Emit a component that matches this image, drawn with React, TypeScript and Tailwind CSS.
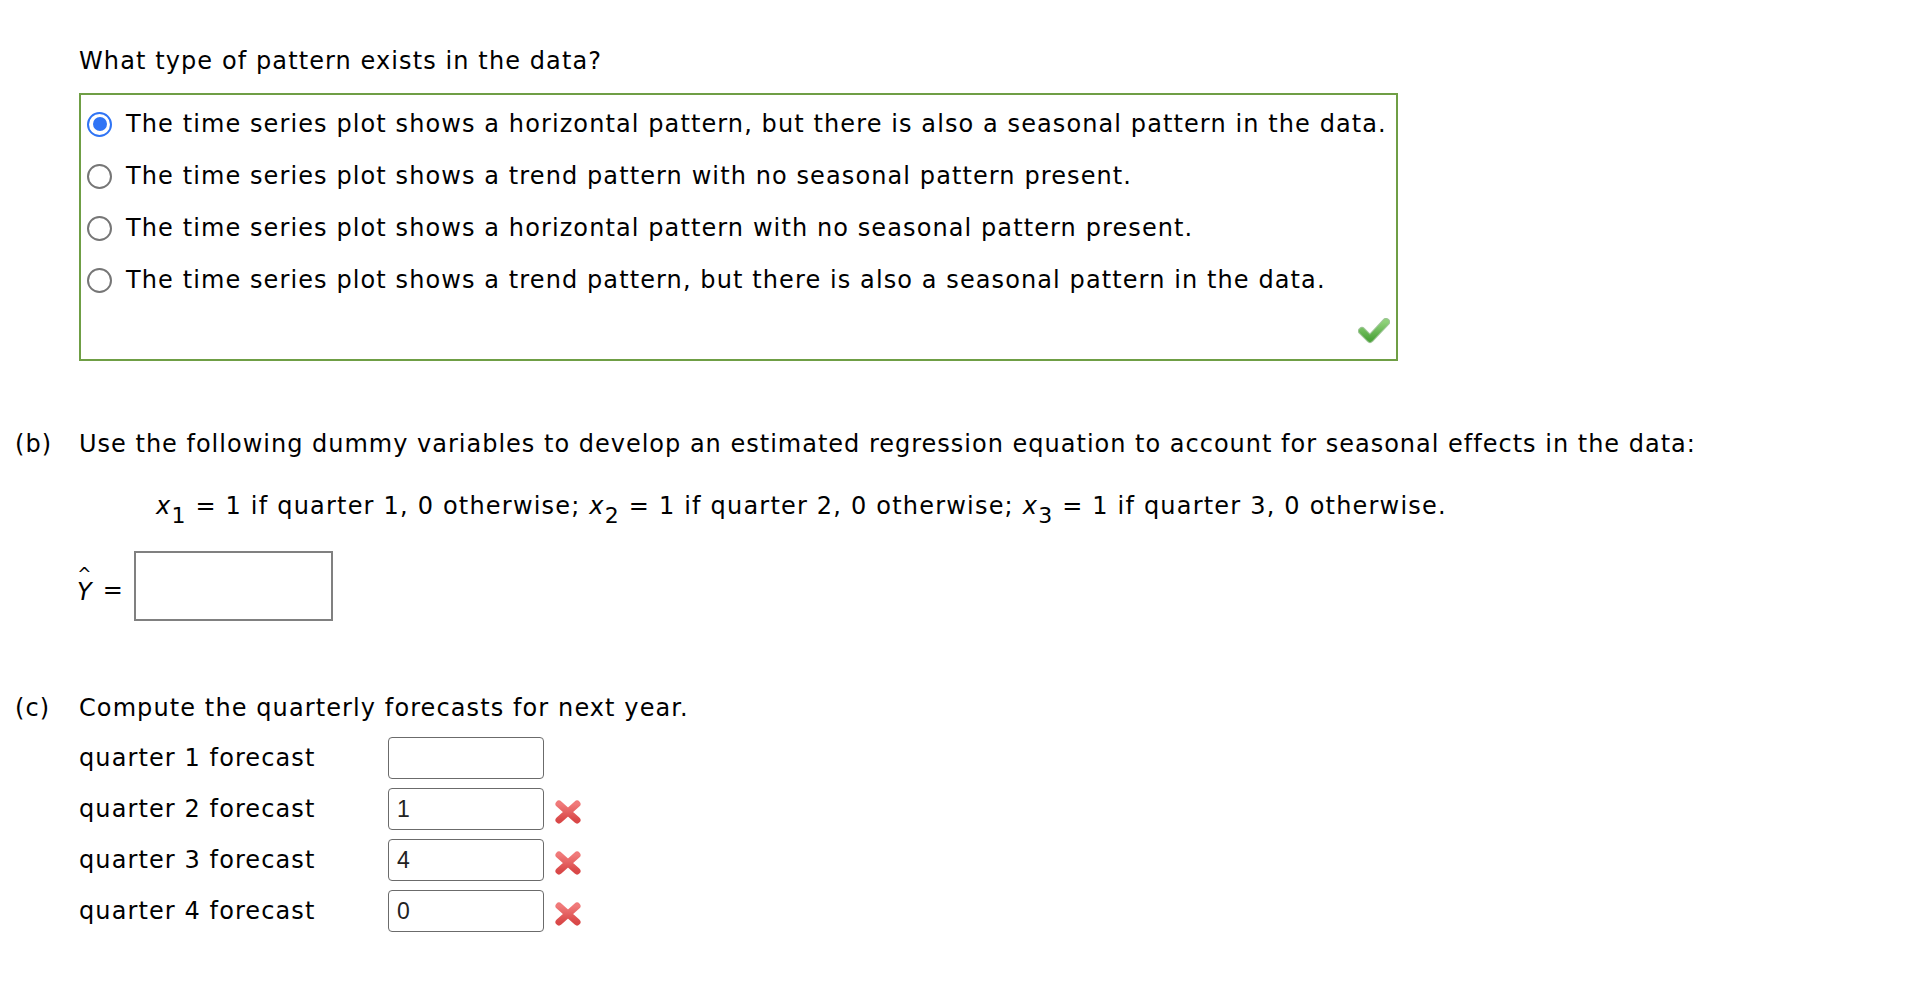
import React from 'react'

const options = [
  'The time series plot shows a horizontal pattern, but there is also a seasonal pattern in the data.',
  'The time series plot shows a trend pattern with no seasonal pattern present.',
  'The time series plot shows a horizontal pattern with no seasonal pattern present.',
  'The time series plot shows a trend pattern, but there is also a seasonal pattern in the data.',
]

const forecasts = [
  { label: 'quarter 1 forecast', value: '', wrong: false },
  { label: 'quarter 2 forecast', value: '1', wrong: true },
  { label: 'quarter 3 forecast', value: '4', wrong: true },
  { label: 'quarter 4 forecast', value: '0', wrong: true },
]

function Radio({ checked }: { checked: boolean }) {
  if (checked) {
    return (
      <span className="flex h-[25px] w-[25px] shrink-0 items-center justify-center rounded-full border-[2.5px] border-[#2f74f5] bg-white">
        <span className="h-[14px] w-[14px] rounded-full bg-[#2f74f5]" />
      </span>
    )
  }
  return <span className="h-[25px] w-[25px] shrink-0 rounded-full border-[2px] border-[#767676] bg-white" />
}

function CheckMark() {
  return (
    <svg width="32" height="26" viewBox="0 0 32 26">
      <defs>
        <linearGradient id="chk" x1="0" y1="0" x2="0" y2="1">
          <stop offset="0" stopColor="#8fd17a" />
          <stop offset="1" stopColor="#4ea53c" />
        </linearGradient>
      </defs>
      <path d="M4 13 L12 21 L28 4" fill="none" stroke="#3f8a32" strokeWidth="8" strokeLinecap="round" strokeLinejoin="round" opacity="0.5" />
      <path d="M4 13 L12 21 L28 4" fill="none" stroke="url(#chk)" strokeWidth="6" strokeLinecap="round" strokeLinejoin="round" />
    </svg>
  )
}

function Cross() {
  return (
    <svg width="28" height="26" viewBox="0 0 28 26">
      <defs>
        <linearGradient id="crs" x1="0" y1="0" x2="0" y2="1">
          <stop offset="0" stopColor="#f07a7a" />
          <stop offset="1" stopColor="#d94848" />
        </linearGradient>
      </defs>
      <path d="M5 5 L23 21 M23 5 L5 21" fill="none" stroke="url(#crs)" strokeWidth="7" strokeLinecap="round" />
    </svg>
  )
}

function Sub({ v, n }: { v: string; n: string }) {
  return (
    <span>
      <i>{v}</i>
      <span className="relative top-[9px] text-[22px]">{n}</span>
    </span>
  )
}

export default function App() {
  return (
    <div
      className="min-h-screen bg-white pt-[46px] text-[24px] leading-[30px] tracking-[1.1px] text-black"
      style={{ fontFamily: '"DejaVu Sans", Verdana, sans-serif' }}
    >
      <div className="pl-[79px]">
        <div>What type of pattern exists in the data?</div>

        <div className="mt-[17px] w-[1319px] border-2 border-[#6f9e45] pt-[3px] pb-[15px]">
          {options.map((o, i) => (
            <div key={i} className="flex h-[52px] items-center pl-[6px]">
              <Radio checked={i === 0} />
              <span className="ml-[14px]">{o}</span>
            </div>
          ))}
          <div className="mt-[12px] flex justify-end pr-[6px]">
            <CheckMark />
          </div>
        </div>
      </div>

      <div className="mt-[68px] flex">
        <span className="w-[79px] shrink-0 pl-[15px]">(b)</span>
        <span className="tracking-[1px]">Use the following dummy variables to develop an estimated regression equation to account for seasonal effects in the data:</span>
      </div>

      <div className="mt-[32px] pl-[156px] tracking-[1.2px]">
        <Sub v="x" n="1" /> = 1 if quarter 1, 0 otherwise; <Sub v="x" n="2" /> = 1 if quarter 2, 0 otherwise; <Sub v="x" n="3" /> = 1 if quarter 3, 0 otherwise.
      </div>

      <div className="mt-[29px] flex items-center pl-[77px]">
        <span className="flex flex-col items-center pt-[2px]">
          <span className="h-[10px] text-[17px] leading-[10px]">^</span>
          <span className="italic leading-[26px]">Y</span>
        </span>
        <span className="ml-[10px] pt-[8px]">=</span>
        <div className="ml-[10px] h-[70px] w-[199px] border-2 border-[#808080] bg-white" />
      </div>

      <div className="mt-[72px] flex">
        <span className="w-[79px] shrink-0 pl-[15px]">(c)</span>
        <span>Compute the quarterly forecasts for next year.</span>
      </div>

      <div className="mt-[14px] flex flex-col gap-[9px] pl-[79px]">
        {forecasts.map((f) => (
          <div key={f.label} className="flex h-[42px] items-center">
            <span className="w-[309px]">{f.label}</span>
            <div
              className="flex h-[42px] w-[156px] items-center rounded-[4px] border-[1.5px] border-[#6b6b6b] px-[8px] text-[23px] tracking-normal text-[#222]"
              style={{ fontFamily: '"Liberation Sans", Arial, sans-serif' }}
            >
              {f.value}
            </div>
            {f.wrong && (
              <span className="ml-[10px] mt-[6px]">
                <Cross />
              </span>
            )}
          </div>
        ))}
      </div>
    </div>
  )
}
